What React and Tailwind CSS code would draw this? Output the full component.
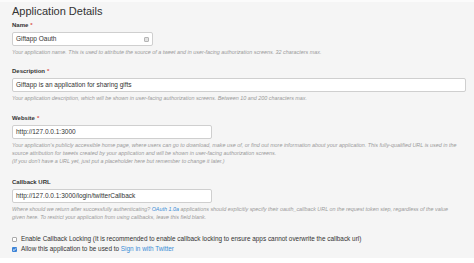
import React from "react";

const font = { fontFamily: '"Liberation Sans", Arial, sans-serif' };

const Label = ({ children, required }) => (
  <div className="h-[8px] flex items-center text-[6px] font-bold text-[#333]">
    {children}
    {required && <span className="ml-[2px] text-[#d9534f]">*</span>}
  </div>
);

const Field = ({ value, width, icon }) => (
  <div
    className={`mt-[3px] h-[14px] ${width} flex items-center justify-between bg-white border border-[#cfcfcf] rounded-[2px] pl-[3px] pr-[3px] text-[6.5px] text-[#333]`}
  >
    <span>{value}</span>
    {icon && (
      <span className="w-[5px] h-[5px] rounded-[1px] border border-[#b5b5b5] bg-[#e3e3e3]" />
    )}
  </div>
);

const Hint = ({ children }) => (
  <div className="mt-[2px] text-[5.4px] leading-[8px] italic text-[#9a9a9a] whitespace-nowrap">
    {children}
  </div>
);

export default function App() {
  return (
    <div className="w-[474px] h-[263px] bg-white overflow-hidden" style={font}>
      <div className="h-[258px] bg-[#f5f5f5] border-t-2 border-[#fbfbfb] px-[12px]">
        <div className="h-[19px] flex items-center text-[11px] text-[#333]">
          Application Details
        </div>

        {/* Name */}
        <Label required>Name</Label>
        <Field value="Giftapp Oauth" width="w-[141px]" icon />
        <Hint>
          Your application name. This is used to attribute the source of a tweet and in user-facing authorization screens. 32 characters max.
        </Hint>

        {/* Description */}
        <div className="mt-[11px]">
          <Label required>Description</Label>
        </div>
        <Field value="Giftapp is an application for sharing gifts" width="w-[454px]" />
        <Hint>
          Your application description, which will be shown in user-facing authorization screens. Between 10 and 200 characters max.
        </Hint>

        {/* Website */}
        <div className="mt-[12px]">
          <Label required>Website</Label>
        </div>
        <Field value="http://127.0.0.1:3000" width="w-[200px]" />
        <Hint>
          Your application's publicly accessible home page, where users can go to download, make use of, or find out more information about your application. This fully-qualified URL is used in the
          <br />
          source attribution for tweets created by your application and will be shown in user-facing authorization screens.
          <br />
          (If you don't have a URL yet, just put a placeholder here but remember to change it later.)
        </Hint>

        {/* Callback */}
        <div className="mt-[13px]">
          <Label>Callback URL</Label>
        </div>
        <Field value="http://127.0.0.1:3000/login/twitterCallback" width="w-[200px]" />
        <Hint>
          Where should we return after successfully authenticating? <span className="text-[#3b8ed6]">OAuth 1.0a</span> applications should explicitly specify their oauth_callback URL on the request token step, regardless of the value
          <br />
          given here. To restrict your application from using callbacks, leave this field blank.
        </Hint>

        <div className="mt-[13px] h-[10px] flex items-center gap-[4px] text-[6.4px] text-[#333]">
          <span className="w-[5px] h-[5px] bg-white border border-[#aaa] rounded-[1px]" />
          <span>
            Enable Callback Locking (It is recommended to enable callback locking to ensure apps cannot overwrite the callback url)
          </span>
        </div>
        <div className="h-[10px] flex items-center gap-[4px] text-[6.4px] text-[#333]">
          <span className="w-[5px] h-[5px] bg-[#3b82d6] rounded-[1px] flex items-center justify-center">
            <svg viewBox="0 0 10 10" className="w-[5px] h-[5px]">
              <path d="M2 5.2 L4.2 7.2 L8 2.8" fill="none" stroke="white" strokeWidth="1.8" />
            </svg>
          </span>
          <span>
            Allow this application to be used to{" "}
            <span className="text-[#3b8ed6]">Sign in with Twitter</span>
          </span>
        </div>
      </div>
    </div>
  );
}
